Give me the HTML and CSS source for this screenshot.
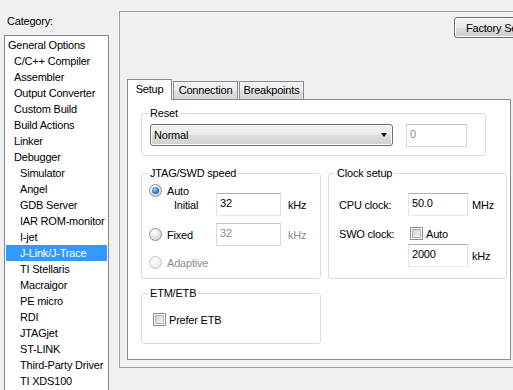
FILE: index.html
```html
<!DOCTYPE html>
<html lang="en">
<head>
  <meta charset="UTF-8" />
  <title>Options</title>
  <link rel="stylesheet" href="styles.css">
</head>
<body>
  <div class="window">
    <div class="sidebar">
      <div class="cat-label">Category:</div>
      <div class="listbox">
        <div class="item">General Options</div>
        <div class="item sub">C/C++ Compiler</div>
        <div class="item sub">Assembler</div>
        <div class="item sub">Output Converter</div>
        <div class="item sub">Custom Build</div>
        <div class="item sub">Build Actions</div>
        <div class="item sub">Linker</div>
        <div class="item sub">Debugger</div>
        <div class="item sub2">Simulator</div>
        <div class="item sub2">Angel</div>
        <div class="item sub2">GDB Server</div>
        <div class="item sub2">IAR ROM-monitor</div>
        <div class="item sub2">I-jet</div>
        <div class="item sub2 selected">J-Link/J-Trace</div>
        <div class="item sub2">TI Stellaris</div>
        <div class="item sub2">Macraigor</div>
        <div class="item sub2">PE micro</div>
        <div class="item sub2">RDI</div>
        <div class="item sub2">JTAGjet</div>
        <div class="item sub2">ST-LINK</div>
        <div class="item sub2">Third-Party Driver</div>
        <div class="item sub2">TI XDS100</div>
      </div>
    </div>

    <div class="main">
      <div class="panel">
        <div class="toolbar">
          <button class="btn">Factory Settings</button>
        </div>

        <div class="tabs">
          <div class="tab tab-setup active">Setup</div>
          <div class="tab">Connection</div>
          <div class="tab">Breakpoints</div>
        </div>

        <div class="tab-page">
          <div class="group group-reset">
            <div class="group-title">Reset</div>
            <div class="reset-row">
              <div class="combo">
                <span>Normal</span>
                <span class="arrow"></span>
              </div>
              <div class="field field-reset disabled">0</div>
            </div>
          </div>

          <div class="group-row">
            <div class="group group-speed">
              <div class="group-title">JTAG/SWD speed</div>
              <div class="speed-body">
                <div class="opt opt-auto">
                  <span class="radio checked"></span>
                  <span>Auto</span>
                </div>
                <div class="opt opt-initial">
                  <span class="opt-label-initial">Initial</span>
                  <div class="field field-speed">32</div>
                  <span class="unit">kHz</span>
                </div>
                <div class="opt opt-fixed">
                  <span class="radio"></span>
                  <span class="opt-label-fixed">Fixed</span>
                  <div class="field field-speed disabled">32</div>
                  <span class="unit gray">kHz</span>
                </div>
                <div class="opt opt-adaptive">
                  <span class="radio disabled"></span>
                  <span class="gray">Adaptive</span>
                </div>
              </div>
            </div>

            <div class="group group-clock">
              <div class="group-title">Clock setup</div>
              <div class="clock-body">
                <div class="clk-row">
                  <span class="clk-label">CPU clock:</span>
                  <div class="field field-clock">50.0</div>
                  <span class="clk-unit">MHz</span>
                </div>
                <div class="clk-row clk-swo">
                  <span class="clk-label">SWO clock:</span>
                  <span class="check check-swo"></span>
                  <span class="check-text">Auto</span>
                </div>
                <div class="clk-row clk-khz">
                  <div class="field field-clock">2000</div>
                  <span class="clk-unit">kHz</span>
                </div>
              </div>
            </div>
          </div>

          <div class="group group-etm">
            <div class="group-title">ETM/ETB</div>
            <div class="etm-body">
              <span class="check"></span>
              <span class="check-text">Prefer ETB</span>
            </div>
          </div>
        </div>
      </div>
    </div>
  </div>
</body>
</html>
```

FILE: styles.css
```css
* {
  box-sizing: border-box;
}

body {
  margin: 0;
  background: #f0f0f0;
  font-family: 'Liberation Sans', Arial, sans-serif;
  font-size: 11px;
  letter-spacing: -0.2px;
  color: #000;
  overflow: hidden;
}

.window {
  display: flex;
  width: 513px;
  height: 390px;
  overflow: hidden;
}

/* category list */

.sidebar {
  width: 105px;
  margin-left: 4px;
  flex-shrink: 0;
}

.cat-label {
  height: 35px;
  padding: 15px 0 0 3px;
  line-height: 13px;
}

.listbox {
  height: 400px;
  padding: 1px;
  overflow: hidden;
  background: #fff;
  border: 1px solid #828790;
}

.item {
  height: 16px;
  line-height: 16px;
  padding-left: 2px;
  white-space: nowrap;
}

.item.sub { padding-left: 8px; }
.item.sub2 { padding-left: 14px; }

.item.selected {
  background: #3399ff;
  color: #fff;
}

/* right side */

.main {
  flex: 1;
  padding: 11px 0 0 10px;
}

.panel {
  height: 357px;
  border: 1px solid #a0a0a0;
  border-right: none;
}

.toolbar {
  height: 26px;
  padding: 5px 0 0 334px;
}

.btn {
  width: 100px;
  height: 21px;
  padding: 0 0 0 11px;
  text-align: left;
  font: inherit;
  letter-spacing: inherit;
  white-space: nowrap;
  color: #000;
  border: 1px solid #707070;
  border-radius: 3px;
  background: linear-gradient(#f2f2f2, #ebebeb 50%, #dddddd 51%, #cfcfcf);
  box-shadow: inset 0 0 0 1px #fcfcfc;
}

.tabs {
  display: flex;
  align-items: flex-end;
  height: 20px;
  margin: 41px 0 0 7px;
}

.tab {
  width: 65px;
  height: 18px;
  padding-top: 2px;
  text-align: center;
  border: 1px solid #898c95;
  border-bottom: none;
  background: linear-gradient(#f3f3f3, #ebebeb 50%, #dedede 51%, #d8d8d8);
  margin-right: 1px;
}

.tab.active {
  position: relative;
  z-index: 1;
  width: 45px;
  height: 21px;
  margin-bottom: -1px;
  padding-top: 3px;
  background: #fff;
}

.tab-page {
  width: 384px;
  height: 261px;
  margin-left: 7px;
  background: #fff;
  border: 1px solid #898c95;
}

/* group boxes */

.group {
  position: relative;
  border: 1px solid #d5dfe5;
  border-radius: 3px;
}

.group-title {
  position: absolute;
  top: -7px;
  left: 6px;
  padding: 0 2px;
  line-height: 13px;
  background: #fff;
  white-space: nowrap;
}

.group-reset {
  width: 345px;
  height: 43px;
  margin: 13px 0 0 13px;
}

.reset-row {
  display: flex;
  padding: 10px 0 0 8px;
}

.combo {
  display: flex;
  align-items: center;
  justify-content: space-between;
  width: 243px;
  height: 22px;
  margin-right: 13px;
  padding: 0 5px 0 3px;
  border: 1px solid #707070;
  border-radius: 3px;
  background: linear-gradient(#f2f2f2, #ebebeb 50%, #dddddd 51%, #cfcfcf);
  box-shadow: inset 0 0 0 1px #fbfbfb;
}

.arrow {
  width: 0;
  height: 0;
  border-left: 3.5px solid transparent;
  border-right: 3.5px solid transparent;
  border-top: 4px solid #000;
}

.field {
  height: 23px;
  padding: 3px 0 0 3px;
  line-height: 13px;
  background: #fff;
  border: 1px solid #e3e9ef;
  border-top-color: #abadb3;
  border-left-color: #e2e3ea;
  border-right-color: #dbdfe6;
}

.field.disabled {
  color: #8d8d8d;
  border-color: #d9d9d9;
  border-top-color: #c2c2c2;
}

.field-reset { width: 61px; }
.field-speed { width: 65px; }
.field-clock { width: 60px; }

.gray { color: #8d8d8d; }

.group-row {
  display: flex;
  gap: 7px;
  margin: 17px 0 0 13px;
}

.group-speed {
  width: 180px;
  height: 106px;
}

.group-clock {
  width: 179px;
  height: 106px;
}

.speed-body {
  padding: 10px 0 0 7px;
}

.opt {
  display: flex;
  align-items: center;
}

.opt-auto {
  height: 13px;
  margin-bottom: -4px;
}

.opt-initial {
  height: 23px;
  padding-left: 25px;
}

.opt-label-initial { width: 42px; }
.opt-label-fixed { width: 49px; }

.opt-fixed {
  height: 23px;
  margin-top: 7px;
}

.opt-adaptive {
  height: 13px;
  margin-top: 10px;
}

.unit { margin-left: 7px; }

.radio {
  position: relative;
  width: 13px;
  height: 13px;
  margin-right: 5px;
  border-radius: 50%;
  border: 1px solid #8e8f8f;
  background: radial-gradient(circle at 35% 30%, #ffffff, #e4e4e4 50%, #c6c9cd);
}

.radio.checked::after {
  content: '';
  position: absolute;
  top: 2px;
  left: 2px;
  width: 7px;
  height: 7px;
  border-radius: 50%;
  background: radial-gradient(circle at 40% 35%, #9cdcff, #2c7fc4 55%, #0c3f78);
}

.radio.disabled {
  border-color: #c4c4c4;
  background: radial-gradient(circle at 35% 30%, #ffffff, #eeeeee 60%, #dedede);
}

.clock-body {
  padding: 19px 0 0 10px;
}

.clk-row {
  display: flex;
  align-items: center;
  height: 23px;
}

.clk-label { width: 69px; }
.clk-unit { margin-left: 4px; }

.clk-swo {
  height: 13px;
  margin-top: 11px;
}

.clk-khz {
  margin-top: 4px;
  padding-left: 69px;
}

.check {
  position: relative;
  width: 13px;
  height: 13px;
  border: 1px solid #8e8f8f;
  background: #fff;
}

.check::after {
  content: '';
  position: absolute;
  inset: 1px;
  border: 1px solid #aeb3b9;
  background: linear-gradient(135deg, #cbcfd5, #f6f6f6);
}

.check-swo { margin-left: 2px; }

.check-text { margin-left: 3px; }

.group-etm {
  width: 180px;
  height: 51px;
  margin: 14px 0 0 13px;
}

.etm-body {
  display: flex;
  align-items: center;
  padding: 19px 0 0 11px;
}
```
